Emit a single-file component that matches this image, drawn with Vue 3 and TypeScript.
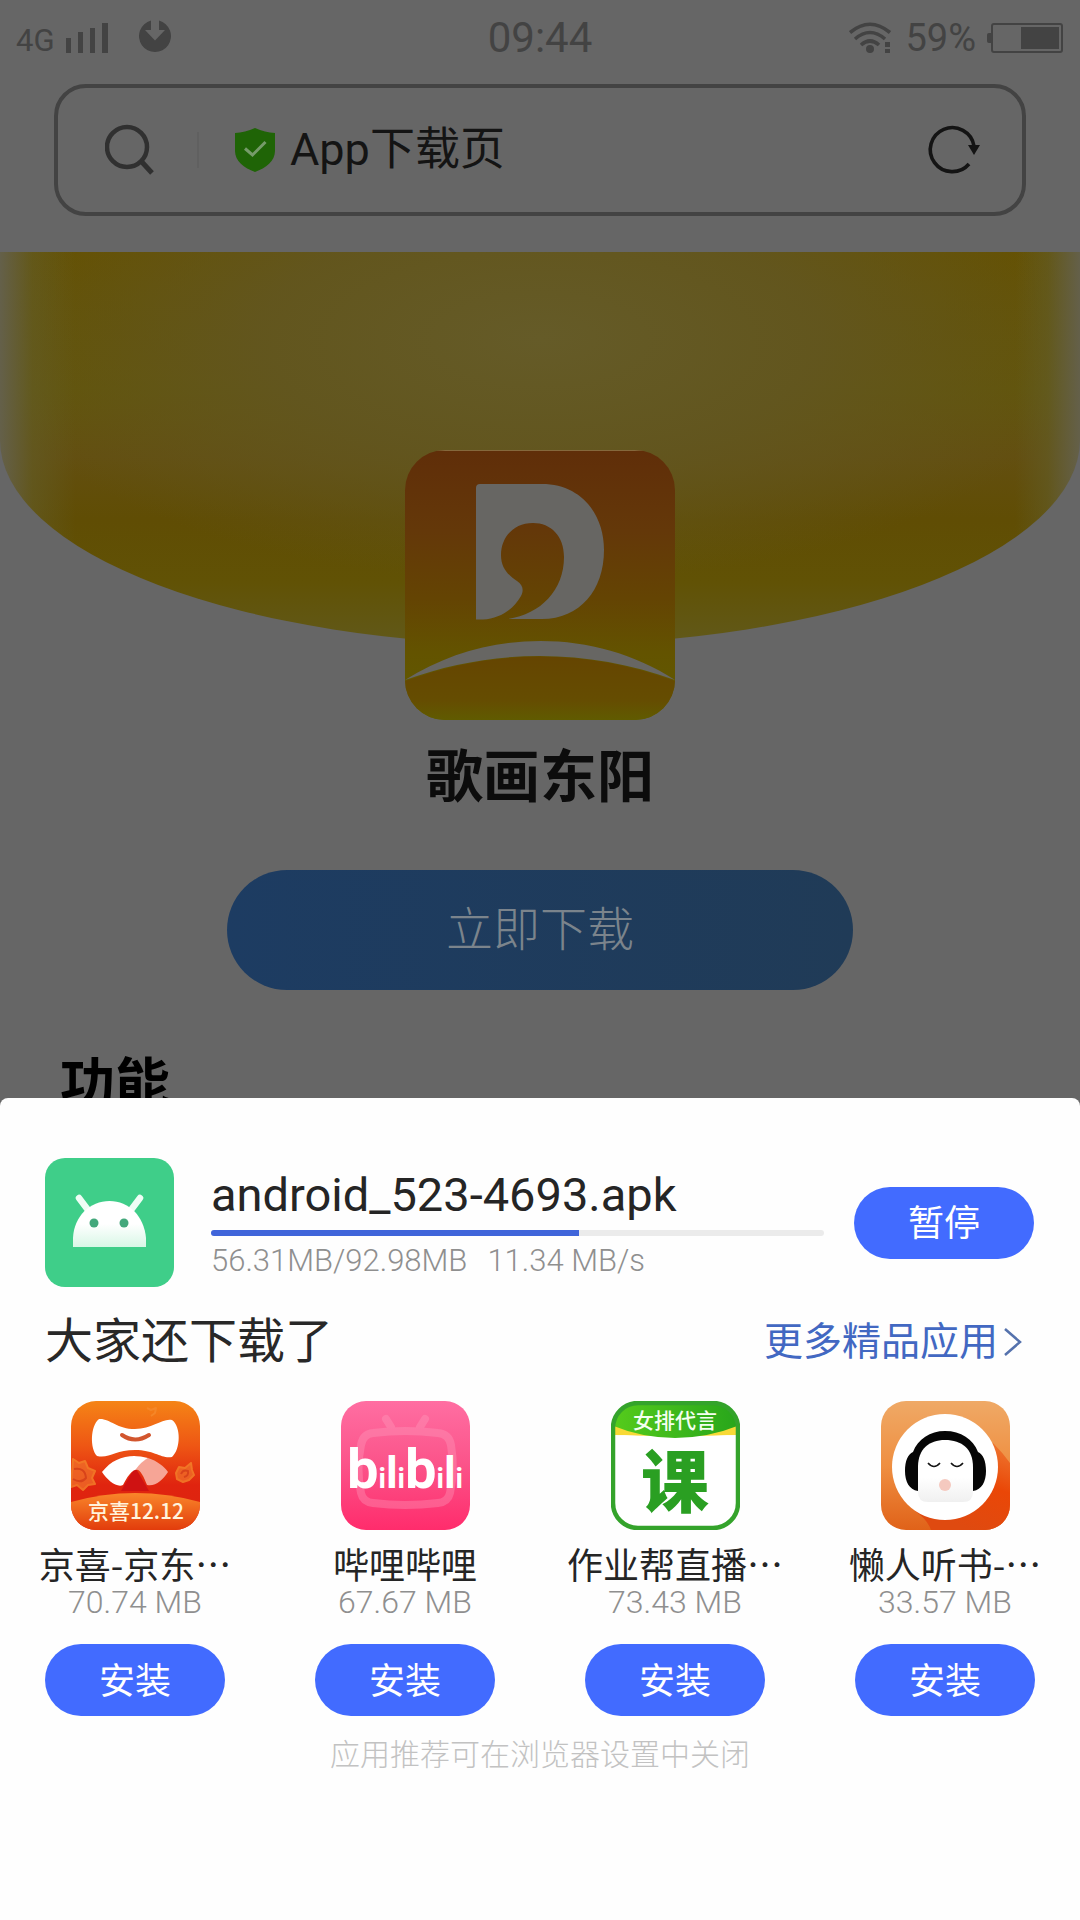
<script setup lang="ts">
import { ref } from 'vue'

type IconName = 'jingxi' | 'bilibili' | 'zuoye' | 'lanren'

interface AppItem {
  icon: IconName
  name: string
  size: string
}

const address = ref('App下载页')

const progress = ref(60)

const apps: AppItem[] = [
  { icon: 'jingxi', name: '京喜-京东…', size: '70.74 MB' },
  { icon: 'bilibili', name: '哔哩哔哩', size: '67.67 MB' },
  { icon: 'zuoye', name: '作业帮直播…', size: '73.43 MB' },
  { icon: 'lanren', name: '懒人听书-…', size: '33.57 MB' },
]
</script>

<template>
  <div class="screen">
    <header class="status">
      <div class="status-side">
        <span class="network">4G</span>
        <svg class="signal" width="42" height="32" viewBox="0 0 42 32" aria-hidden="true">
          <rect x="0" y="16" width="5" height="15" />
          <rect x="12" y="10" width="5" height="21" />
          <rect x="24" y="6" width="5" height="25" />
          <rect x="36" y="1" width="6" height="30" />
        </svg>
        <svg class="dl-icon" width="34" height="34" viewBox="0 0 34 34" aria-hidden="true">
          <path d="M13 1.6A16 16 0 1 0 21 1.6V11H27L17 21.500L7 11H13Z" />
        </svg>
      </div>
      <span class="time">09:44</span>
      <div class="status-side right">
        <svg width="44" height="32" viewBox="0 0 44 32" aria-hidden="true">
          <g fill="none" stroke="#434343" stroke-width="3.600">
            <path d="M1 10.500Q21 -6 41 10.500" />
            <path d="M6 17Q21 4 36 17" />
            <path d="M12 23Q21 15 30 23" />
          </g>
          <circle cx="21" cy="27" r="4" fill="#434343" />
          <path d="M36 20h5v5h-5zM36 27h5v4h-5z" fill="#434343" />
        </svg>
        <span class="percent">59%</span>
        <svg width="78" height="32" viewBox="0 0 78 32" aria-hidden="true">
          <path d="M5 11H3Q1 11 1 13V19Q1 21 3 21H5Z" fill="#434343" />
          <rect x="6" y="2" width="70" height="28" rx="2" fill="none" stroke="#434343" stroke-width="2" />
          <rect x="35" y="5" width="38" height="22" fill="#434343" />
        </svg>
      </div>
    </header>

    <form class="search" @submit.prevent>
      <svg width="50" height="52" viewBox="0 0 50 52" aria-hidden="true">
        <circle cx="22" cy="23" r="20" fill="none" stroke="#303030" stroke-width="4.500" />
        <path d="M36 37L47 49" stroke="#303030" stroke-width="5" />
      </svg>
      <span class="divider"></span>
      <svg width="40" height="44" viewBox="0 0 40 44" aria-hidden="true">
        <path d="M0 5Q10 4.500 20 0Q30 4.500 40 5V23C40 33 31 40 20 44C9 40 0 33 0 23Z" fill="#1f6406" />
        <path d="M10 20.500L17.500 27L30.500 14" fill="none" stroke="#769b6a" stroke-width="3" />
      </svg>
      <input v-model="address" class="address" type="text" aria-label="网址" />
      <button class="refresh" type="button" aria-label="刷新">
        <svg width="54" height="54" viewBox="0 0 54 54" aria-hidden="true">
          <path d="M43 41A22 22 0 1 1 48 23" fill="none" stroke="#141414" stroke-width="3.600" />
          <path d="M42 22H54L48 32Z" fill="#141414" />
        </svg>
      </button>
    </form>

    <main class="page">
      <div class="hero"></div>
      <svg class="logo" width="270" height="270" viewBox="0 0 270 270" role="img" aria-label="歌画东阳">
        <defs>
          <linearGradient id="logo-sky" x1="0" y1="0" x2="0" y2="1">
            <stop offset="0" stop-color="#602e09" />
            <stop offset="0.300" stop-color="#643809" />
            <stop offset="0.550" stop-color="#644403" />
            <stop offset="0.750" stop-color="#635300" />
            <stop offset="1" stop-color="#605c00" />
          </linearGradient>
          <linearGradient id="logo-ground" x1="0" y1="0" x2="0" y2="1">
            <stop offset="0" stop-color="#654501" />
            <stop offset="0.700" stop-color="#654d01" />
            <stop offset="1" stop-color="#605b00" />
          </linearGradient>
          <clipPath id="logo-clip"><rect width="270" height="270" rx="40" /></clipPath>
        </defs>
        <g clip-path="url(#logo-clip)">
          <rect width="270" height="270" fill="url(#logo-sky)" />
          <rect width="270" height="1" fill="#85683c" />
          <path d="M0 231Q135 182 270 231V270H0Z" fill="url(#logo-ground)" />
          <path d="M0 230C82 178 190 178 270 230C182 198 88 198 0 230Z" fill="#676663" />
        </g>
        <path
          d="M71 38Q71 34 75 34H137C176 34 199 64 199 100C199 140 175 169 137 169H103C136 164 159 140 159 107C159 86 146 73 128 73C108 73 96 88 96 105C96 118 103 125 112 131C118 135 119 140 116 146C108 160 95 168 78 169.500H71Z"
          fill="#676663"
        />
      </svg>
      <h1 class="title">歌画东阳</h1>
      <button class="get" type="button">立即下载</button>
      <h2 class="features">功能</h2>
    </main>

    <section class="sheet" aria-label="下载">
      <div class="download">
        <svg class="apk" width="129" height="129" viewBox="0 0 129 129" aria-hidden="true">
          <defs>
            <linearGradient id="robot" x1="0" y1="0" x2="0" y2="1">
              <stop offset="0.500" stop-color="#ffffff" />
              <stop offset="1" stop-color="#d8f7e6" />
            </linearGradient>
          </defs>
          <rect width="129" height="129" rx="20" fill="#3fce89" />
          <path d="M34 40L43 52M95 40L86 52" stroke="#effdf5" stroke-width="6.500" stroke-linecap="round" />
          <path d="M28 89V80C29 58 45 43 64.500 43C84 43 99 58 101 80V89Z" fill="url(#robot)" />
          <circle cx="49" cy="65" r="4.500" fill="#43a87b" />
          <circle cx="79" cy="65" r="4.500" fill="#43a87b" />
        </svg>
        <div class="info">
          <div class="file">android_523-4693.apk</div>
          <div class="track" role="progressbar" aria-label="下载进度" :aria-valuenow="progress" aria-valuemin="0" aria-valuemax="100">
            <div class="bar" :style="{ width: progress + '%' }"></div>
          </div>
          <div class="amount"><span>56.31MB/92.98MB</span><span>11.34 MB/s</span></div>
        </div>
        <button class="pill" type="button">暂停</button>
      </div>

      <div class="more-row">
        <h2 class="more-title">大家还下载了</h2>
        <a class="more-link" href="#">
          更多精品应用
          <svg width="18" height="28" viewBox="0 0 18 28" aria-hidden="true">
            <path d="M1 1L16 14L1 27" fill="none" stroke="#5572ad" stroke-width="2.500" />
          </svg>
        </a>
      </div>

      <ul class="apps">
        <li v-for="app in apps" :key="app.name" class="app">
          <svg v-if="app.icon === 'jingxi'" class="icon" viewBox="0 0 129 129" aria-hidden="true">
            <defs>
              <linearGradient id="jx-bg" x1="0" y1="0" x2="0" y2="1">
                <stop offset="0" stop-color="#f58416" />
                <stop offset="0.350" stop-color="#ee5614" />
                <stop offset="0.650" stop-color="#e0240f" />
                <stop offset="1" stop-color="#dc2410" />
              </linearGradient>
              <linearGradient id="jx-hill" x1="0" y1="0" x2="0" y2="1">
                <stop offset="0" stop-color="#f9862a" />
                <stop offset="1" stop-color="#e23c0c" />
              </linearGradient>
              <clipPath id="jx-clip"><rect width="129" height="129" rx="25" /></clipPath>
            </defs>
            <g clip-path="url(#jx-clip)">
              <rect width="129" height="129" fill="url(#jx-bg)" />
              <g fill="#f0702a" stroke="#f58a2c" stroke-linejoin="round">
                <path d="M2 58L8 62L14 60L17 67L24 70L21 77L24 83L17 84L12 89L6 84L0 86Z" stroke-width="2" opacity="0.750" />
                <path d="M3 68Q14 66 15 77Q10 83 2 78" fill="none" stroke="#d8431a" stroke-width="2" />
                <path d="M108 66L114 67L120 62L121 69L123 74L118 79L112 81L106 78L105 72Z" stroke-width="2" opacity="0.750" />
                <path d="M110 73Q112 68 117 70Q118 75 113 76" fill="none" stroke="#d8431a" stroke-width="2" />
                <path d="M76 7L80 9L85 7L84 12L80 15" fill="none" stroke-width="2" opacity="0.800" />
              </g>
              <path d="M50 90L64 66L78 90Z" fill="#cf1212" />
              <path d="M0 101Q64 83 129 101V129H0Z" fill="url(#jx-hill)" />
            </g>
            <path
              d="M28 18C38 17 46 28 64 28C82 28 91 17 101 19C110 25 110 48 101 56C90 58 84 49 64 49C44 49 38 58 26 55C19 48 19 25 28 18Z"
              fill="#ffffff"
            />
            <path d="M51 34Q64 43 78 34" fill="none" stroke="#d2562e" stroke-width="4" stroke-linecap="round" />
            <path d="M31 71C40 60 50 55 64 55L68 68C60 68 56 77 52 84C46 87 36 79 31 71Z" fill="#ffffff" />
            <path d="M64 68Q70 60 77 57C86 60 93 65 97 71C92 79 84 86 76 84C73 77 70 68 64 68Z" fill="#f6a596" />
            <path d="M62 55Q70 55 77 57Q70 61 65 68H60Z" fill="#ffffff" />
            <text class="jx-text" x="65" y="118" text-anchor="middle">京喜12.12</text>
          </svg>

          <svg v-else-if="app.icon === 'bilibili'" class="icon" viewBox="0 0 129 129" aria-hidden="true">
            <defs>
              <linearGradient id="bl-bg" x1="0" y1="0" x2="0" y2="1">
                <stop offset="0" stop-color="#ff6ea2" />
                <stop offset="0.500" stop-color="#fb5389" />
                <stop offset="1" stop-color="#ff2c6c" />
              </linearGradient>
            </defs>
            <rect width="129" height="129" rx="25" fill="url(#bl-bg)" />
            <g fill="none" stroke="#ffa0c0" stroke-width="8" opacity="0.350" stroke-linecap="round">
              <path d="M45 18L50 26M84 18L79 26" />
              <path d="M32 32Q64 28 97 32Q108 33 110 44Q114 68 109 92Q107 101 97 102Q64 106 32 102Q22 101 20 92Q15 68 20 44Q22 33 32 32Z" />
            </g>
            <text class="bl-text" x="64" y="87" text-anchor="middle"><tspan class="bl-b">b</tspan><tspan class="bl-i">i</tspan><tspan class="bl-l">l</tspan><tspan class="bl-i">i</tspan><tspan class="bl-b">b</tspan><tspan class="bl-i">i</tspan><tspan class="bl-l">l</tspan><tspan class="bl-i">i</tspan></text>
          </svg>

          <svg v-else-if="app.icon === 'zuoye'" class="icon" viewBox="0 0 129 129" aria-hidden="true">
            <defs>
              <linearGradient id="zy-top" x1="0" y1="0" x2="1" y2="0">
                <stop offset="0" stop-color="#56cc1c" />
                <stop offset="1" stop-color="#27a51b" />
              </linearGradient>
              <clipPath id="zy-clip"><rect x="2" y="2" width="125" height="125" rx="26" /></clipPath>
            </defs>
            <g clip-path="url(#zy-clip)">
              <rect width="129" height="129" fill="#ffffff" />
              <path d="M0 0H129V34Q64 36 0 34Z" fill="#f8d936" />
              <path d="M0 35Q20 33 40 37H90Q110 33 129 35V42H0Z" fill="#ffffff" />
              <path d="M0 0H129V24Q98 37 64 37Q30 37 0 24Z" fill="url(#zy-top)" />
            </g>
            <rect x="2" y="2" width="125" height="125" rx="25" fill="none" stroke="#34a32b" stroke-width="4.500" />
            <text class="zy-top-text" x="64" y="27" text-anchor="middle">女排代言</text>
            <text class="zy-text" x="64" y="106" text-anchor="middle">课</text>
          </svg>

          <svg v-else class="icon" viewBox="0 0 129 129" aria-hidden="true">
            <defs>
              <linearGradient id="lr-bg" x1="0" y1="0" x2="0" y2="1">
                <stop offset="0" stop-color="#efa966" />
                <stop offset="0.500" stop-color="#ef8f41" />
                <stop offset="1" stop-color="#e06219" />
              </linearGradient>
              <linearGradient id="lr-shade" x1="1" y1="0" x2="0.600" y2="1">
                <stop offset="0" stop-color="#ee7a33" />
                <stop offset="0.500" stop-color="#ea4707" />
                <stop offset="1" stop-color="#df4a10" />
              </linearGradient>
              <linearGradient id="lr-face" x1="0" y1="0" x2="0" y2="1">
                <stop offset="0.600" stop-color="#ffffff" />
                <stop offset="1" stop-color="#f0f0f0" />
              </linearGradient>
              <clipPath id="lr-clip"><rect width="129" height="129" rx="25" /></clipPath>
            </defs>
            <g clip-path="url(#lr-clip)">
              <rect width="129" height="129" fill="url(#lr-bg)" />
              <path d="M112 42Q122 52 129 62V129H50Q46 118 34 110Z" fill="url(#lr-shade)" />
            </g>
            <circle cx="64" cy="66" r="53" fill="#ffffff" />
            <path d="M37 90C28 89 24 80 24 70C24 60 27 53 32 51C37 38 49 30 64 30C80 30 92 38 97 51C102 53 105 60 105 70C105 80 101 89 92 90Z" fill="#060606" />
            <path d="M37 91V66C37 48 48 39 64 39C81 39 92 48 92 66V91Q92 101 82 101H47Q37 101 37 91Z" fill="url(#lr-face)" />
            <path d="M47 62Q53 69 59 62M70 62Q76 69 82 62" fill="none" stroke="#161616" stroke-width="1.600" />
            <circle cx="64" cy="84" r="6" fill="#f5c9bf" />
          </svg>

          <div class="name">{{ app.name }}</div>
          <div class="size">{{ app.size }}</div>
          <button class="pill install" type="button">安装</button>
        </li>
      </ul>

      <p class="note">应用推荐可在浏览器设置中关闭</p>
    </section>
  </div>
</template>

<style>
body {
  margin: 0;
  background: #666666;
}
</style>

<style scoped>
.screen {
  position: relative;
  min-height: 100vh;
  overflow: hidden;
  background: #666666;
  font-family: Roboto, "Noto Sans CJK SC", sans-serif;
}

button {
  border: 0;
  padding: 0;
  font-family: inherit;
}

h1,
h2,
p,
ul {
  margin: 0;
  padding: 0;
}

svg {
  display: block;
  flex: none;
}

.status {
  display: flex;
  align-items: center;
  height: 76px;
  padding: 0 16px;
  color: #434343;
}

.status-side {
  flex: 1;
  display: flex;
  align-items: center;
}

.right {
  justify-content: flex-end;
}

.network {
  font-size: 31px;
  line-height: 36px;
  margin-top: 6px;
}

.signal {
  margin-left: 11px;
  fill: #434343;
}

.dl-icon {
  margin: 0 0 4px 30px;
  fill: #434343;
}

.time {
  font-size: 42px;
  line-height: 48px;
}

.percent {
  margin: 0 10px 0 12px;
  font-size: 38px;
  line-height: 44px;
}

.search {
  display: flex;
  align-items: center;
  box-sizing: border-box;
  height: 132px;
  margin: 8px 54px 36px;
  padding: 0 42px 0 47px;
  border: 4px solid #434343;
  border-radius: 32px;
}

.divider {
  width: 2px;
  height: 36px;
  margin: 0 36px 0 42px;
  background: #606060;
}

.address {
  flex: 1;
  min-width: 0;
  margin-left: 15px;
  padding: 0;
  border: 0;
  outline: 0;
  background: transparent;
  color: #141414;
  font-family: inherit;
  font-size: 45px;
  line-height: 60px;
}

.refresh {
  background: transparent;
}

.page {
  display: flex;
  flex-direction: column;
  align-items: center;
}

.hero {
  align-self: stretch;
  height: 393px;
  border-radius: 0 0 50% 50% / 0 0 205px 205px;
  background:
    linear-gradient(90deg, #64604a 0%, rgba(98, 92, 40, 0.6) 3%, rgba(97, 88, 10, 0) 7%, rgba(97, 88, 10, 0) 94%, rgba(98, 92, 40, 0.6) 97%, #64604a 100%),
    radial-gradient(ellipse 52% 62% at 50% 22%, rgba(101, 91, 40, 1) 0%, rgba(98, 86, 32, 0.9) 50%, rgba(98, 84, 20, 0) 100%),
    linear-gradient(180deg, #655100 0%, #625509 35%, #634f10 52%, #604d04 68%, #615205 84%, #61591a 100%);
}

.logo {
  margin-top: -195px;
}

.title {
  margin-top: 12px;
  color: #0c0c0c;
  font-family: "Noto Sans CJK SC", sans-serif;
  font-size: 57px;
  font-weight: 700;
  line-height: 80px;
}

.get {
  width: 58%;
  height: 120px;
  margin-top: 58px;
  border-radius: 60px;
  background: linear-gradient(90deg, #1d3c62, #203b57);
  color: #7b848c;
  font-size: 47px;
  font-weight: 300;
  line-height: 60px;
}

.features {
  align-self: flex-start;
  margin: 49px 0 0 60px;
  color: #000000;
  font-family: "Noto Sans CJK SC", sans-serif;
  font-size: 55px;
  font-weight: 700;
  line-height: 80px;
}

.sheet {
  position: absolute;
  right: 0;
  bottom: 0;
  left: 0;
  padding: 60px 0 145px;
  border-radius: 8px 8px 0 0;
  background: #fefefe;
}

.download {
  display: flex;
  align-items: center;
  padding: 0 46px 0 45px;
}

.info {
  flex: 1;
  min-width: 0;
  margin: 0 30px 0 37px;
}

.file {
  color: #252525;
  font-size: 47px;
  line-height: 56px;
}

.track {
  height: 6px;
  margin: 7px 0;
  border-radius: 3px;
  background: #ebebeb;
}

.bar {
  height: 6px;
  border-radius: 3px 0 0 3px;
  background: #4065da;
}

.amount {
  display: flex;
  gap: 20px;
  color: #8f8f8f;
  font-size: 31px;
  font-weight: 300;
  line-height: 36px;
}

.pill {
  flex: none;
  width: 180px;
  height: 72px;
  padding-top: 3px;
  border-radius: 36px;
  background: #426bff;
  color: #ffffff;
  font-size: 36px;
  line-height: 44px;
}

.more-row {
  display: flex;
  align-items: center;
  justify-content: space-between;
  margin-top: 25px;
  padding: 0 58px 0 45px;
}

.more-title {
  color: #282828;
  font-size: 48px;
  font-weight: 400;
  line-height: 60px;
}

.more-link {
  display: flex;
  align-items: center;
  gap: 6px;
  color: #4268c2;
  font-size: 39px;
  line-height: 56px;
  text-decoration: none;
}

.apps {
  display: grid;
  grid-template-columns: repeat(4, 1fr);
  margin-top: 29px;
  list-style: none;
}

.app {
  display: flex;
  flex-direction: column;
  align-items: center;
}

.icon {
  width: 129px;
  height: 129px;
}

.name {
  margin-top: 11px;
  color: #252525;
  font-family: "Noto Sans CJK SC", sans-serif;
  font-size: 36px;
  line-height: 44px;
  white-space: nowrap;
}

.size {
  color: #8f8f8f;
  font-size: 32px;
  font-weight: 300;
  line-height: 34px;
}

.install {
  margin-top: 25px;
}

.note {
  margin-top: 19px;
  color: #c2c2c2;
  font-size: 30px;
  font-weight: 300;
  line-height: 40px;
  text-align: center;
}

.jx-text {
  fill: #fff3dc;
  font-family: "Noto Sans CJK SC", sans-serif;
  font-size: 21px;
  font-weight: 500;
}

.bl-text {
  fill: #ffffff;
  font-family: Roboto, sans-serif;
  font-weight: 700;
}

.bl-b {
  font-size: 56px;
}

.bl-i {
  font-size: 28px;
}

.bl-l {
  font-size: 44px;
}

.zy-top-text {
  fill: #f4fff0;
  font-family: "Noto Sans CJK SC", sans-serif;
  font-size: 21px;
  font-weight: 500;
}

.zy-text {
  fill: #2a9f22;
  font-family: "Noto Sans CJK SC", sans-serif;
  font-size: 68px;
  font-weight: 900;
}
</style>
